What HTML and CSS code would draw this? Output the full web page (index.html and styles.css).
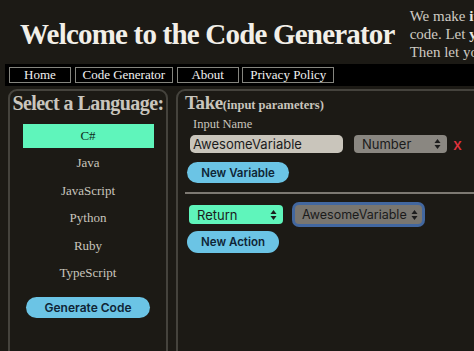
FILE: index.html
```html
<!DOCTYPE html>
<html lang="en">
<head>
<meta charset="utf-8">
<title>Code Generator</title>
<link rel="stylesheet" href="styles.css">
</head>
<body>
<header class="site-header">
  <h1 class="title">Welcome to the Code Generator</h1>
  <p class="tagline">We make <b>it easy</b> to write boilerplate<br>code. Let <b>you</b>r ideas drive the design.<br>Then let your generator do the rest.</p>
</header>
<nav class="nav">
  <a class="nav-link" href="#">Home</a>
  <a class="nav-link" href="#">Code Generator</a>
  <a class="nav-link" href="#">About</a>
  <a class="nav-link" href="#">Privacy Policy</a>
</nav>
<main class="main">
  <section class="panel lang-panel">
    <h2 class="panel-title">Select a Language:</h2>
    <ul class="lang-list">
      <li class="lang-item active">C#</li>
      <li class="lang-item">Java</li>
      <li class="lang-item">JavaScript</li>
      <li class="lang-item">Python</li>
      <li class="lang-item">Ruby</li>
      <li class="lang-item">TypeScript</li>
    </ul>
    <button class="pill-btn generate-btn">Generate Code</button>
  </section>
  <section class="panel work-panel">
    <h2 class="panel-title take-title">Take<small class="take-sub">(input parameters)</small></h2>
    <div class="field-label">Input Name</div>
    <div class="row param-row">
      <input class="text-input" type="text" value="AwesomeVariable">
      <span class="select select-gray number-select">Number
        <svg class="arrows" width="7" height="12" viewBox="0 0 7 12"><path d="M0.5 5L3.5 1L6.5 5Z M0.5 7L3.5 11L6.5 7Z" fill="#1d1d1d"/></svg>
      </span>
      <span class="remove">x</span>
    </div>
    <button class="pill-btn new-var-btn">New Variable</button>
    <hr class="divider">
    <div class="row action-row">
      <span class="select select-mint return-select">Return
        <svg class="arrows" width="7" height="12" viewBox="0 0 7 12"><path d="M0.5 5L3.5 1L6.5 5Z M0.5 7L3.5 11L6.5 7Z" fill="#1d1d1d"/></svg>
      </span>
      <span class="select select-focus var-select">AwesomeVariable
        <svg class="arrows" width="7" height="12" viewBox="0 0 7 12"><path d="M0.5 5L3.5 1L6.5 5Z M0.5 7L3.5 11L6.5 7Z" fill="#1d1d1d"/></svg>
      </span>
    </div>
    <button class="pill-btn new-action-btn">New Action</button>
  </section>
</main>
</body>
</html>
```
FILE: styles.css
```css
html, body {
  margin: 0;
  padding: 0;
  overflow: hidden;
}
body {
  background: #1c1a15;
  color: #c9c5bd;
  font-family: "Liberation Serif", "Times New Roman", serif;
  width: 474px;
  height: 351px;
}
.site-header {
  box-sizing: border-box;
  display: flex;
  align-items: center;
  height: 64px;
  padding: 4px 0 0 20px;
  gap: 15px;
  white-space: nowrap;
}
.title {
  margin: 0;
  font-size: 29px;
  letter-spacing: -0.8px;
  font-weight: bold;
  color: #f2efe8;
  flex: 0 0 auto;
}
.tagline {
  margin: 0;
  font-size: 15px;
  line-height: 18px;
  color: #cfcbc3;
  flex: 0 0 auto;
}
.tagline b {
  color: #e8e5de;
}
.nav {
  display: flex;
  align-items: flex-start;
  gap: 3.5px;
  margin-left: 5px;
  height: 22px;
  padding: 3px 4px 0;
  box-sizing: border-box;
  background: #000;
}
.nav-link {
  box-sizing: border-box;
  min-width: 62px;
  padding: 0 7px;
  border: 1px solid #85857f;
  color: #f2f2f2;
  font-size: 13px;
  line-height: 14px;
  text-align: center;
  text-decoration: none;
}
.main {
  display: flex;
  gap: 8px;
  padding-left: 8px;
  margin-top: 3px;
}
.panel {
  box-sizing: border-box;
  border: 2px solid #45433d;
  border-radius: 9px;
  height: 300px;
  flex: 0 0 auto;
}
.lang-panel {
  width: 160px;
  display: flex;
  flex-direction: column;
  align-items: center;
}
.panel-title {
  margin: 0;
  font-size: 20px;
  letter-spacing: -0.55px;
  line-height: 22px;
  font-weight: bold;
  color: #c9c5bd;
  padding-top: 1px;
}
.lang-list {
  list-style: none;
  margin: 10px 0 0;
  padding: 0;
  width: 131px;
  display: flex;
  flex-direction: column;
  gap: 3.4px;
}
.lang-item {
  height: 24px;
  line-height: 24px;
  font-size: 13px;
  text-align: center;
  color: #c9c5bd;
}
.lang-item.active {
  background: #5ff5bb;
  color: #0f2d22;
}
.pill-btn {
  border: none;
  border-radius: 11px;
  background: #6bc4e5;
  color: #0f2536;
  font-family: Inter, "Liberation Sans", sans-serif;
  font-weight: 600;
  font-size: 11.5px;
  padding: 0;
  height: 21px;
  cursor: pointer;
}
.generate-btn {
  width: 124px;
  margin-top: 12px;
  font-size: 12px;
}
.work-panel {
  width: 330px;
  padding-left: 7px;
}
.take-title {
  font-size: 19px;
  letter-spacing: -0.4px;
}
.take-sub {
  font-size: 12.5px;
  letter-spacing: 0;
}
.field-label {
  font-size: 12.5px;
  line-height: 15px;
  margin: 1px 0 0 8px;
}
.row {
  display: flex;
  align-items: center;
}
.param-row {
  margin-top: 3px;
  height: 18px;
  padding-left: 5px;
}
.text-input {
  box-sizing: border-box;
  width: 153px;
  height: 18px;
  border: none;
  border-radius: 5px;
  background: #c9c5bb;
  color: #1b1b1b;
  font-family: Inter, "Liberation Sans", sans-serif;
  font-size: 13px;
  padding: 0 3px;
  margin: 0;
  outline: none;
}
.select {
  box-sizing: border-box;
  display: flex;
  align-items: center;
  justify-content: space-between;
  height: 19px;
  border-radius: 4px;
  padding: 0 6px 0 8px;
  color: #1b1b1b;
  font-family: Inter, "Liberation Sans", sans-serif;
  font-size: 13px;
}
.select-gray {
  background: #8a8781;
}
.number-select {
  width: 93px;
  height: 18px;
  margin-left: 11px;
}
.remove {
  margin-left: 6px;
  color: #e1323d;
  font-family: Inter, "Liberation Sans", sans-serif;
  font-size: 16px;
  font-weight: 500;
  line-height: 18px;
}
.new-var-btn {
  width: 102px;
  margin: 9px 0 0 2px;
}
.divider {
  border: none;
  height: 2px;
  background: #7d7972;
  margin: 9px 0 0 0;
}
.action-row {
  margin-top: 11px;
  padding-left: 4px;
}
.select-mint {
  background: #5ff5bb;
}
.return-select {
  width: 94px;
}
.select-focus {
  background: #797670;
  box-shadow: 0 0 0 3px #42679f;
}
.var-select {
  width: 127px;
  margin-left: 12px;
  padding-left: 7px;
  padding-right: 4px;
  font-size: 12.5px;
}
.new-action-btn {
  width: 92px;
  height: 22px;
  margin: 7px 0 0 2px;
}
```
